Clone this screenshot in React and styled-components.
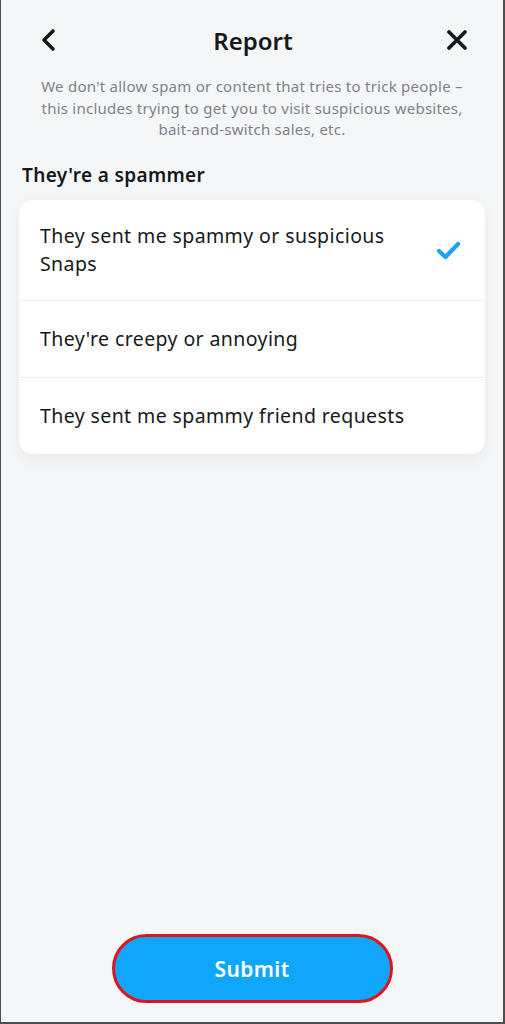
import React from 'react';
import styled, { createGlobalStyle } from 'styled-components';

const Global = createGlobalStyle`
  html, body { margin: 0; padding: 0; }
  body { font-family: "Noto Sans", "Open Sans", sans-serif; }
  * { box-sizing: border-box; }
`;

const Screen = styled.div`
  width: 505px;
  height: 1024px;
  background: #f5f6f8;
  border-left: 1px solid #4d4d4d;
  border-right: 2px solid #4d4d4d;
  border-bottom: 2px solid #4d4d4d;
  display: flex;
  flex-direction: column;
`;

const Header = styled.div`
  height: 80px;
  display: flex;
  align-items: center;
  justify-content: space-between;
  padding: 0 34px 0 36px;
`;

const IconButton = styled.button`
  background: none;
  border: none;
  padding: 0;
  width: 24px;
  height: 24px;
  display: flex;
  align-items: center;
  justify-content: center;
  cursor: pointer;
`;

const Title = styled.h1`
  margin: 0;
  font-size: 24px;
  font-weight: 600;
  color: #16191c;
`;

const Desc = styled.p`
  margin: -4px 0 0;
  padding: 0 40px;
  text-align: center;
  font-size: 15px;
  letter-spacing: 0.25px;
  line-height: 21.5px;
  color: #7d828a;
`;

const Section = styled.h2`
  margin: 21px 0 0 21px;
  font-size: 19px;
  letter-spacing: 0.35px;
  font-weight: 600;
  color: #16191c;
`;

const Card = styled.div`
  margin: 12px 18px 0 18px;
  background: #fff;
  border-radius: 14px;
  box-shadow: 0 4px 16px rgba(0, 0, 0, 0.06);
  overflow: hidden;
`;

const Row = styled.div`
  display: flex;
  align-items: center;
  justify-content: space-between;
  padding: ${p => (p.tall ? '22px 22px 22px 21px' : '0 22px 0 21px')};
  min-height: ${p => (p.tall ? '100px' : '77px')};
  border-top: ${p => (p.first ? 'none' : '1px solid #ebecee')};
  font-size: 19.5px;
  letter-spacing: 0.4px;
  line-height: 28px;
  color: #16191c;
`;

const RowText = styled.span`
  max-width: 370px;
`;

const Spacer = styled.div`
  flex: 1;
`;

const Footer = styled.div`
  display: flex;
  justify-content: center;
  padding-bottom: 19px;
`;

const Submit = styled.button`
  width: 281px;
  height: 69px;
  border-radius: 35px;
  border: 3px solid #e0141d;
  background: #0fa6fc;
  color: #fff;
  font-family: inherit;
  font-size: 21px;
  letter-spacing: 0.4px;
  font-weight: 600;
  cursor: pointer;
`;

const Back = () => (
  <svg width="20" height="24" viewBox="0 0 20 24">
    <path d="M14 3 L5 12 L14 21" fill="none" stroke="#16191c" strokeWidth="3.6" strokeLinecap="round" strokeLinejoin="round" />
  </svg>
);

const Close = () => (
  <svg width="24" height="24" viewBox="0 0 24 24">
    <path d="M4 4 L20 20 M20 4 L4 20" fill="none" stroke="#16191c" strokeWidth="3.8" strokeLinecap="round" />
  </svg>
);

const Check = () => (
  <svg width="28" height="22" viewBox="0 0 28 22">
    <path d="M4 12 L10.5 18 L23 5" fill="none" stroke="#1da1f2" strokeWidth="4.2" strokeLinecap="round" strokeLinejoin="round" />
  </svg>
);

const options = [
  'They sent me spammy or suspicious Snaps',
  "They're creepy or annoying",
  'They sent me spammy friend requests',
];

export default function App() {
  return (
    <Screen>
      <Global />
      <Header>
        <IconButton><Back /></IconButton>
        <Title>Report</Title>
        <IconButton><Close /></IconButton>
      </Header>
      <Desc>
        We don't allow spam or content that tries to trick people – this includes trying to get you to visit suspicious websites, bait-and-switch sales, etc.
      </Desc>
      <Section>They're a spammer</Section>
      <Card>
        {options.map((o, i) => (
          <Row key={o} first={i === 0} tall={i === 0}>
            <RowText>{o}</RowText>
            {i === 0 && <Check />}
          </Row>
        ))}
      </Card>
      <Spacer />
      <Footer>
        <Submit>Submit</Submit>
      </Footer>
    </Screen>
  );
}
